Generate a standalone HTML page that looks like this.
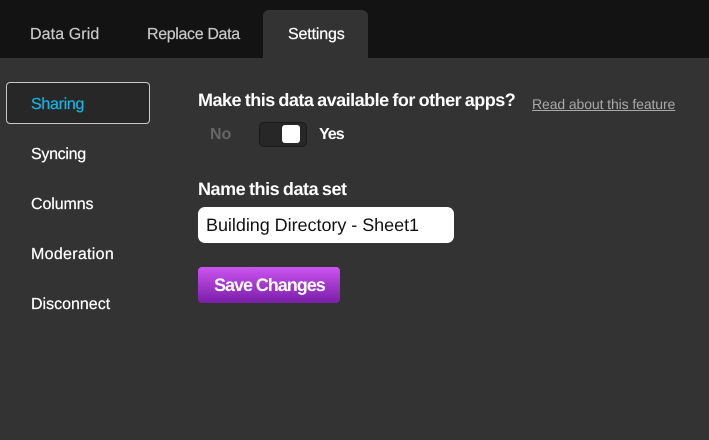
<!DOCTYPE html>
<html><head><meta charset="utf-8">
<style>
html,body{margin:0;padding:0;width:709px;height:440px;overflow:hidden;background:#333;font-family:"Liberation Sans",sans-serif;text-rendering:geometricPrecision;}
.a{position:absolute;white-space:nowrap;}
#top{left:0;top:0;width:709px;height:58px;background:#131313;}
#tab{left:263px;top:10px;width:105px;height:48px;background:#333;border-radius:6px 6px 0 0;}
.t{font-size:16px;line-height:18px;color:#c8c8c8;-webkit-text-stroke:.2px currentColor;}
.s{font-size:16px;left:31px;line-height:18px;color:#fff;-webkit-text-stroke:.2px currentColor;}
#act{left:6px;top:82px;width:142px;height:40px;border:1px solid #c9c9c9;border-radius:4px;background:#272727;}
.h{font-size:18px;font-weight:bold;color:#fff;line-height:22px;left:198px;letter-spacing:-.5px;word-spacing:-.8px;}
#tog{left:259px;top:122px;width:48px;height:25px;box-sizing:border-box;background:#272727;border:1px solid #191919;border-radius:5px;}
#knob{left:282px;top:125px;width:18px;height:18px;background:#fff;border-radius:3px;}
#inp{left:198px;top:207px;width:256px;height:36px;background:#fff;border-radius:7px;}
#btn{left:198px;top:267px;width:142px;height:36px;border-radius:4px;background:linear-gradient(#cc54f0,#7a1ea8);}
</style></head><body>
<div class="a" id="top"></div>
<div class="a" id="tab"></div>
<div class="a t" style="left:30px;top:26px;letter-spacing:.1px">Data Grid</div>
<div class="a t" style="left:147px;top:26px;letter-spacing:-.35px">Replace Data</div>
<div class="a t" style="left:288px;top:26px;color:#fff;letter-spacing:-.15px">Settings</div>
<div class="a" id="act"></div>
<div class="a s" style="top:96px;color:#12b5e5;letter-spacing:-.3px">Sharing</div>
<div class="a s" style="top:146px;letter-spacing:-.3px">Syncing</div>
<div class="a s" style="top:196px;letter-spacing:-.1px">Columns</div>
<div class="a s" style="top:246px;letter-spacing:.3px">Moderation</div>
<div class="a s" style="top:296px">Disconnect</div>
<div class="a h" style="top:89px">Make this data available for other apps?</div>
<div class="a" style="left:532px;top:96px;font-size:14px;line-height:16px;color:#a8a8a8;text-decoration:underline;letter-spacing:-.1px">Read about this feature</div>
<div class="a" style="left:210px;top:125px;font-size:16px;font-weight:bold;line-height:19px;color:#666">No</div>
<div class="a" id="tog"></div>
<div class="a" id="knob"></div>
<div class="a" style="left:319px;top:125px;font-size:16px;font-weight:bold;line-height:19px;color:#fff;letter-spacing:-1px">Yes</div>
<div class="a h" style="top:178px;letter-spacing:-.45px">Name this data set</div>
<div class="a" id="inp"></div>
<div class="a" style="left:206px;top:215px;font-size:18px;line-height:21px;color:#111;letter-spacing:-.04px">Building Directory - Sheet1</div>
<div class="a" id="btn"></div>
<div class="a" style="left:214px;top:275px;font-size:18px;font-weight:bold;line-height:21px;color:#fff;letter-spacing:-1px;word-spacing:-.3px">Save Changes</div>
</body></html>
